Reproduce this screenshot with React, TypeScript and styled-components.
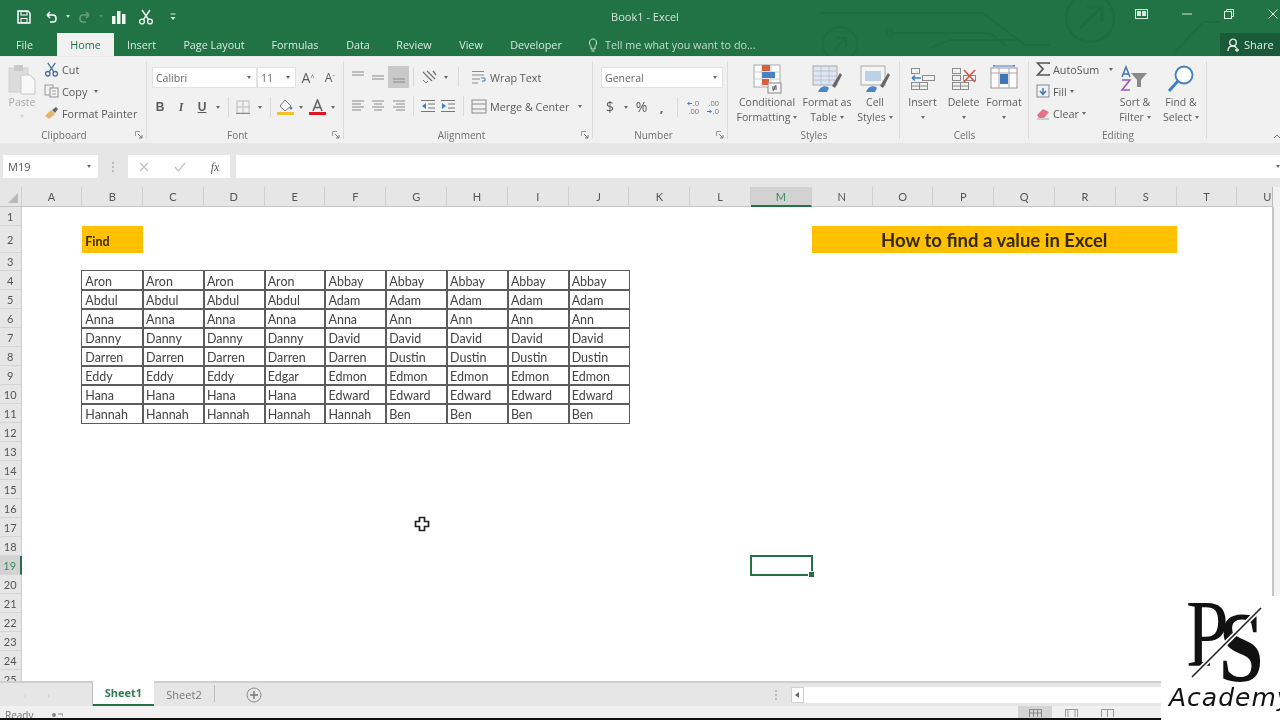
import React from "react";
import styled, { createGlobalStyle } from "styled-components";

const GREEN = "#217346";
const COL_WIDTH = 60.8;

const GlobalStyle = createGlobalStyle`
  html, body {
    margin: 0;
    padding: 0;
    background: #fff;
    overflow: hidden;
  }
  * {
    box-sizing: border-box;
  }
`;

const Window = styled.div`
  position: relative;
  width: 1280px;
  height: 720px;
  overflow: hidden;
  display: flex;
  flex-direction: column;
  background: #fff;
  font-family: "Open Sans", "Liberation Sans", sans-serif;
  font-size: 11px;
  color: #555;
  filter: blur(0.6px);
`;

/* title bar */
const TitleBar = styled.div`
  position: relative;
  z-index: 1;
  height: 33px;
  flex: none;
  background: ${GREEN};
  display: grid;
  grid-template-columns: 1fr auto 1fr;
  align-items: center;
  padding-left: 10px;
`;

const QuickAccess = styled.div`
  display: flex;
  align-items: center;
`;

const QuickSlot = styled.span<{ $w: number; $faded?: boolean }>`
  width: ${(p) => p.$w}px;
  display: flex;
  align-items: center;
  justify-content: center;
  opacity: ${(p) => (p.$faded ? 0.3 : 1)};
`;

const Title = styled.div`
  color: #d5e5db;
  font-size: 11px;
`;

const WindowButtons = styled.div`
  display: flex;
  justify-content: flex-end;
  align-items: center;
  position: relative;
  z-index: 1;
  margin-top: -5px;
`;

const WindowButton = styled.span<{ $w: number }>`
  width: ${(p) => p.$w}px;
  display: flex;
  justify-content: center;
`;

const CircuitArt = styled.svg`
  position: absolute;
  left: 800px;
  top: 0;
  pointer-events: none;
`;

/* tab strip */
const TabBar = styled.div`
  position: relative;
  height: 23px;
  flex: none;
  background: ${GREEN};
  display: flex;
  align-items: stretch;
  color: #dbe8e0;
`;

const Tab = styled.div<{ $w: number; $active?: boolean }>`
  width: ${(p) => p.$w}px;
  margin-left: ${(p) => (p.$active ? 8 : 0)}px;
  display: flex;
  align-items: center;
  justify-content: center;
  font-size: 10.8px;
  background: ${(p) => (p.$active ? "#f1f1f1" : "transparent")};
  color: ${(p) => (p.$active ? GREEN : "inherit")};
`;

const TellMe = styled.div`
  display: flex;
  align-items: center;
  gap: 7px;
  margin-left: 15px;
  font-size: 10.8px;
  color: #c4d9cc;
`;

const Share = styled.div`
  position: relative;
  z-index: 2;
  margin-left: auto;
  width: 60px;
  background: #1b5a38;
  color: #e3eee8;
  display: flex;
  align-items: center;
  gap: 4px;
  padding-left: 7px;
  font-size: 11px;
`;

/* ribbon */
const Ribbon = styled.div`
  position: relative;
  height: 87px;
  flex: none;
  display: flex;
  background: #f1f1f1;
  border-top: 1px solid #e8e8e8;
`;

const Group = styled.section<{ $w: number }>`
  position: relative;
  width: ${(p) => p.$w}px;
  flex: none;
  display: flex;
  flex-direction: column;
  &::after {
    content: "";
    position: absolute;
    right: 0;
    top: 4px;
    bottom: 4px;
    width: 1px;
    background: #dcdcdc;
  }
`;

const GroupBody = styled.div<{ $pad?: number; $col?: boolean }>`
  flex: 1;
  min-height: 0;
  display: flex;
  flex-direction: ${(p) => (p.$col ? "column" : "row")};
  padding-left: ${(p) => p.$pad ?? 0}px;
`;

const GroupLabel = styled.div<{ $shift?: number }>`
  height: 17px;
  flex: none;
  text-align: center;
  font-size: 10px;
  line-height: 18px;
  color: #6f6f6f;
  padding-right: ${(p) => p.$shift ?? 0}px;
`;

const Launcher = styled.svg`
  position: absolute;
  right: 4px;
  bottom: 4px;
`;

const PasteCol = styled.div`
  width: 44px;
  display: flex;
  flex-direction: column;
  align-items: center;
  padding-top: 7px;
  color: #a8a8a8;
  font-size: 10.5px;
  line-height: 14px;
`;

const SmallCol = styled.div<{ $w?: number }>`
  width: ${(p) => (p.$w ? `${p.$w}px` : "auto")};
  flex: none;
  display: flex;
  flex-direction: column;
  padding-top: 1px;
`;

const SmallButton = styled.div`
  height: 22px;
  display: flex;
  align-items: center;
  gap: 3px;
  font-size: 10.8px;
  color: #5a5a5a;
  white-space: nowrap;
  svg {
    flex: none;
  }
`;

const ToolRow = styled.div<{ $h: number; $top?: number }>`
  height: ${(p) => p.$h}px;
  margin-top: ${(p) => p.$top ?? 0}px;
  display: flex;
  align-items: center;
`;

const Slot = styled.span<{ $w: number; $active?: boolean }>`
  width: ${(p) => p.$w}px;
  flex: none;
  height: 100%;
  display: flex;
  align-items: center;
  justify-content: center;
  background: ${(p) => (p.$active ? "#c9c9c9" : "transparent")};
`;

const Glyph = styled.span<{ $size?: number; $weight?: number; $italic?: boolean; $underline?: boolean; $font?: string }>`
  font-size: ${(p) => p.$size ?? 12}px;
  font-weight: ${(p) => p.$weight ?? 400};
  font-style: ${(p) => (p.$italic ? "italic" : "normal")};
  text-decoration: ${(p) => (p.$underline ? "underline" : "none")};
  font-family: ${(p) => p.$font ?? "inherit"};
  color: #5c5c5c;
  line-height: 1;
`;

const Divider = styled.span<{ $l?: number; $r?: number }>`
  width: 1px;
  height: 20px;
  flex: none;
  background: #d8d8d8;
  margin-left: ${(p) => p.$l ?? 0}px;
  margin-right: ${(p) => p.$r ?? 0}px;
`;

const Caret = styled.span<{ $light?: boolean }>`
  width: 0;
  height: 0;
  flex: none;
  display: inline-block;
  border-left: 2.5px solid transparent;
  border-right: 2.5px solid transparent;
  border-top: 3px solid ${(p) => (p.$light ? "#c8d8ce" : "#6a6a6a")};
`;

const SelectBox = styled.div<{ $w: number }>`
  width: ${(p) => p.$w}px;
  height: 21px;
  flex: none;
  background: #fff;
  border: 1px solid #e2e2e2;
  display: flex;
  align-items: center;
  justify-content: space-between;
  padding: 0 5px 0 3px;
  font-size: 10.5px;
  color: #666;
`;

const DecimalStack = styled.span`
  display: flex;
  flex-direction: column;
  align-items: flex-end;
  font-size: 7.5px;
  line-height: 8px;
  color: #777;
`;

const DecimalLine = styled.span`
  display: flex;
  align-items: center;
  gap: 1px;
`;

const BigButton = styled.div<{ $w: number }>`
  width: ${(p) => p.$w}px;
  flex: none;
  display: flex;
  flex-direction: column;
  align-items: center;
  padding-top: 6px;
  font-size: 10.5px;
  line-height: 15px;
  color: #616161;
  text-align: center;
  white-space: nowrap;
`;

const BigIcon = styled.span`
  height: 32px;
  display: flex;
  align-items: center;
  justify-content: center;
`;

const CaretLine = styled.span`
  display: flex;
  align-items: center;
  justify-content: center;
  gap: 3px;
  height: 15px;
`;

const CollapseArrow = styled.svg`
  position: absolute;
  right: 0;
  bottom: 4px;
`;

/* formula bar */
const Band = styled.div<{ $h: number }>`
  height: ${(p) => p.$h}px;
  flex: none;
  background: #e6e6e6;
`;

const FormulaBar = styled.div`
  height: 23px;
  flex: none;
  background: #e6e6e6;
  display: flex;
  align-items: stretch;
  padding-left: 3px;
`;

const NameBox = styled.div`
  width: 95px;
  background: #fff;
  display: flex;
  align-items: center;
  justify-content: space-between;
  padding: 0 7px 0 5px;
  font-size: 11px;
  color: #555;
`;

const GripDots = styled.div`
  width: 30px;
  display: flex;
  flex-direction: column;
  align-items: center;
  justify-content: center;
  gap: 2px;
  span {
    width: 2px;
    height: 2px;
    background: #bbb;
  }
`;

const FxBox = styled.div`
  width: 102px;
  background: #fff;
  display: flex;
  align-items: center;
  padding-left: 9px;
  color: #bdbdbd;
`;

const FxSlot = styled.span<{ $w: number }>`
  width: ${(p) => p.$w}px;
  display: flex;
  justify-content: center;
`;

const FormulaInput = styled.div`
  flex: 1;
  margin-left: 6px;
  background: #fff;
  display: flex;
  justify-content: flex-end;
  align-items: center;
`;

/* worksheet */
const HeaderRow = styled.div`
  height: 20px;
  flex: none;
  display: flex;
  background: #e6e6e6;
`;

const Corner = styled.div`
  width: 21.5px;
  flex: none;
  display: flex;
  align-items: flex-end;
  justify-content: flex-end;
  padding: 0 3px 3px 0;
  border-right: 1px solid #cfcfcf;
  border-bottom: 1px solid #c4c4c4;
`;

const ColHeader = styled.div<{ $selected?: boolean }>`
  width: ${COL_WIDTH}px;
  flex: none;
  display: flex;
  align-items: center;
  justify-content: center;
  font-size: 11px;
  font-family: Lato, "Open Sans", sans-serif;
  color: ${(p) => (p.$selected ? "#3f8a62" : "#555")};
  background: ${(p) => (p.$selected ? "#d2d2d2" : "transparent")};
  border-right: 1px solid #cfcfcf;
  border-bottom: ${(p) => (p.$selected ? `2px solid ${GREEN}` : "1px solid #c4c4c4")};
`;

const SheetArea = styled.div`
  position: relative;
  flex: 1;
  min-height: 0;
  overflow: hidden;
`;

const Row = styled.div<{ $h: number }>`
  height: ${(p) => p.$h}px;
  display: flex;
`;

const RowHeader = styled.div<{ $selected?: boolean }>`
  width: 21.5px;
  flex: none;
  display: flex;
  align-items: center;
  justify-content: center;
  font-size: 11px;
  font-family: Lato, "Open Sans", sans-serif;
  color: ${(p) => (p.$selected ? "#3f8a62" : "#555")};
  background: ${(p) => (p.$selected ? "#d2d2d2" : "#e6e6e6")};
  border-bottom: 1px solid #d4d4d4;
  border-right: ${(p) => (p.$selected ? `2px solid ${GREEN}` : "1px solid #cfcfcf")};
`;

const Cell = styled.div<{ $span?: number }>`
  width: ${(p) => (p.$span ?? 1) * COL_WIDTH}px;
  flex: none;
`;

const NameCell = styled(Cell)`
  box-shadow: 0 0 0 1px #5c5c5c;
  display: flex;
  align-items: center;
  padding: 2px 0 0 3px;
  font-family: Lato, "Open Sans", sans-serif;
  font-size: 12.5px;
  color: #444;
`;

const FindCell = styled(Cell)`
  background: #ffc000;
  display: flex;
  align-items: center;
  padding: 3px 0 0 3px;
  font-family: Lato, "Open Sans", sans-serif;
  font-size: 12.5px;
  font-weight: 700;
  color: #3a2c00;
`;

const HeadingCell = styled(Cell)`
  background: #ffc000;
  display: flex;
  align-items: center;
  justify-content: center;
  font-family: Lato, "Open Sans", sans-serif;
  font-size: 18.5px;
  font-weight: 700;
  color: #33290a;
`;

const ActiveCell = styled(Cell)`
  position: relative;
  box-shadow: 0 0 0 1px ${GREEN}, inset 0 0 0 1px ${GREEN};
  &::after {
    content: "";
    position: absolute;
    right: -3px;
    bottom: -3px;
    width: 5px;
    height: 5px;
    background: ${GREEN};
    border: 1px solid #fff;
  }
`;

const ScrollTrack = styled.div`
  position: absolute;
  right: 0;
  top: 0;
  bottom: 84px;
  width: 8px;
  background: #f4f4f4;
  border-left: 2px solid #c6c6c6;
`;

const ColumnEdge = styled.div`
  position: absolute;
  right: 0;
  top: 187px;
  width: 8px;
  height: 20px;
  background: #f1f1f1;
  border-left: 1px solid #bbb;
`;

const PointerIcon = styled.svg`
  position: absolute;
  left: 414px;
  top: 516px;
`;

/* bottom bars */
const SheetTabs = styled.div`
  height: 25px;
  flex: none;
  background: #e6e6e6;
  border-top: 2px solid #cfcfcf;
  display: flex;
  align-items: stretch;
`;

const NavArrows = styled.div`
  width: 93px;
  flex: none;
  display: flex;
  align-items: center;
  padding-left: 24px;
  gap: 20px;
  color: #cfcfcf;
  font-size: 10px;
  border-right: 1px solid #bcbcbc;
`;

const SheetTab = styled.div<{ $active?: boolean }>`
  width: ${(p) => (p.$active ? 61 : 60)}px;
  flex: none;
  display: flex;
  align-items: center;
  justify-content: center;
  font-size: 11px;
  font-weight: ${(p) => (p.$active ? 700 : 400)};
  color: ${(p) => (p.$active ? "#2f7d52" : "#777")};
  background: ${(p) => (p.$active ? "#fff" : "transparent")};
  border-bottom: ${(p) => (p.$active ? `2px solid ${GREEN}` : "none")};
  margin-top: ${(p) => (p.$active ? -2 : 0)}px;
`;

const TabSeparator = styled.span`
  width: 1px;
  background: #bcbcbc;
  margin: 2px 0 4px;
`;

const AddSheet = styled.span`
  margin-left: 31px;
  display: flex;
  align-items: center;
`;

const SheetGrip = styled(GripDots)`
  margin-left: auto;
  width: 14px;
`;

const HScroll = styled.div`
  width: 489px;
  margin: 4px 0 3px 8px;
  flex: none;
  display: flex;
  background: #fff;
`;

const HScrollButton = styled.span`
  width: 13px;
  display: flex;
  align-items: center;
  justify-content: center;
  border: 1px solid #d0d0d0;
`;

const StatusBar = styled.div`
  height: 14px;
  flex: none;
  background: #f1f1f1;
  border-bottom: 2px solid #111;
  display: flex;
  align-items: center;
  padding-left: 5px;
  font-size: 10px;
  color: #777;
  overflow: hidden;
`;

const ReadyText = styled.span`
  margin-top: 5px;
  width: 46px;
`;

const ViewButton = styled.span<{ $w: number; $active?: boolean }>`
  width: ${(p) => p.$w}px;
  height: 100%;
  display: flex;
  align-items: center;
  justify-content: center;
  background: ${(p) => (p.$active ? "#d4d4d4" : "transparent")};
`;

const ViewGroup = styled.div`
  margin-left: 955px;
  height: 100%;
  display: flex;
  flex: none;
`;

/* logo watermark */
const Logo = styled.div`
  position: absolute;
  left: 1161px;
  top: 596px;
  width: 119px;
  height: 124px;
  background: #fff;
  overflow: hidden;
`;

const LogoLetter = styled.span<{ $x: number; $y: number; $size: number; $bold?: boolean }>`
  position: absolute;
  left: ${(p) => p.$x}px;
  top: ${(p) => p.$y}px;
  font-family: "Liberation Serif", serif;
  font-size: ${(p) => p.$size}px;
  font-weight: ${(p) => (p.$bold ? 700 : 400)};
  line-height: 1;
  color: #111;
  transform: scaleX(0.8);
  transform-origin: left top;
`;

const LogoSlash = styled.svg`
  position: absolute;
  left: 0;
  top: 0;
`;

const LogoWord = styled.span`
  position: absolute;
  left: 8px;
  top: 87px;
  font-family: "DejaVu Sans", sans-serif;
  font-style: italic;
  font-size: 25px;
  letter-spacing: 1px;
  color: #111;
  white-space: nowrap;
`;

/* drawings */
const Svg = ({ w, h, children }: { w: number; h: number; children: React.ReactNode }) => (
    <svg width={w} height={h} viewBox={`0 0 ${w} ${h}`} fill="none">{children}</svg>
);

const lines = (rows: number[], x1: number, x2: number, color = "#777") => rows.map((y) =>
    <line key={y} x1={x1} y1={y} x2={x2} y2={y} stroke={color} strokeWidth="1" />
);

const ScissorsIcon = ({ color, size = 16 }: { color: string; size?: number }) => (
    <svg width={size} height={size} viewBox="0 0 16 16" fill="none" stroke={color} strokeWidth="1.4">
        <path d="M4 1 L10.5 10.5 M12 1 L5.5 10.5" />
        <circle cx="4" cy="12.5" r="2.4" />
        <circle cx="12" cy="12.5" r="2.4" />
    </svg>
);

const AlignIcon = ({ rows, widths }: { rows: number[]; widths: [number, number][] }) => (
    <Svg w={16} h={16}>
        {rows.map((y, i) => <line key={y} x1={widths[i][0]} x2={widths[i][1]} y1={y} y2={y} stroke="#8a8a8a" />)}
    </Svg>
);

const IndentIcon = ({ flip }: { flip?: boolean }) => (
    <Svg w={16} h={14}>
        {lines([1.5, 12.5], 1, 15)}
        {lines([5, 9], 8, 15)}
        <path d={flip ? "M2 4 L6 7 L2 10 Z" : "M6 4 L2 7 L6 10 Z"} fill="#3f7fc4" />
    </Svg>
);

const SheetGridIcon = ({ accent }: { accent?: string }) => (
    <Svg w={26} h={24}>
        <rect x="1.5" y="1.5" width="8" height="5" stroke="#8b8b8b" />
        <rect x="1.5" y="15.5" width="16" height="7" stroke="#8b8b8b" />
        <line x1="9.5" y1="15.5" x2="9.5" y2="22.5" stroke="#8b8b8b" />
        <line x1="1.5" y1="19" x2="17.5" y2="19" stroke="#8b8b8b" />
        <rect x="12.5" y="8.5" width="12" height="5" stroke="#8b8b8b" />
        {accent === "blue" && <path d="M2 11 L11 11 M2 11 L5 8.5 M2 11 L5 13.5" stroke="#3f7fc4" strokeWidth="1.5" />}
        {accent === "red" && <path d="M13 3 L24 15 M24 3 L13 15" stroke="#d9503f" strokeWidth="1.6" />}
        {accent === "red" && <rect x="1.5" y="8.5" width="8" height="5" stroke="#8b8b8b" />}
    </Svg>
);

const SmallArrow = ({ flip }: { flip?: boolean }) => (
    <Svg w={5} h={5}>
        <path d={flip ? "M0 2.5 H4 M2.5 1 L4.5 2.5 L2.5 4" : "M5 2.5 H1 M2.5 1 L0.5 2.5 L2.5 4"} stroke="#3f7fc4" />
    </Svg>
);

const Launch = () => (
    <Launcher width="8" height="8" viewBox="0 0 8 8" fill="none">
        <path d="M0.5 5 V0.5 H5" stroke="#999" />
        <path d="M3 3 L7 7 M7 4 V7 H4" stroke="#777" />
    </Launcher>
);

const names: string[][] = [
    ["Aron", "Aron", "Aron", "Aron", "Abbay", "Abbay", "Abbay", "Abbay", "Abbay"],
    ["Abdul", "Abdul", "Abdul", "Abdul", "Adam", "Adam", "Adam", "Adam", "Adam"],
    ["Anna", "Anna", "Anna", "Anna", "Anna", "Ann", "Ann", "Ann", "Ann"],
    ["Danny", "Danny", "Danny", "Danny", "David", "David", "David", "David", "David"],
    ["Darren", "Darren", "Darren", "Darren", "Darren", "Dustin", "Dustin", "Dustin", "Dustin"],
    ["Eddy", "Eddy", "Eddy", "Edgar", "Edmon", "Edmon", "Edmon", "Edmon", "Edmon"],
    ["Hana", "Hana", "Hana", "Hana", "Edward", "Edward", "Edward", "Edward", "Edward"],
    ["Hannah", "Hannah", "Hannah", "Hannah", "Hannah", "Ben", "Ben", "Ben", "Ben"],
];

const columns = "ABCDEFGHIJKLMNOPQRSTU".split("");

const rowHeight = (row: number) => {
    if (row === 2) return 27;
    if (row === 3) return 18;
    return 19;
};

const rowContent = (row: number) => {
    if (row === 2) {
        return (
            <>
                <Cell />
                <FindCell>Find</FindCell>
                <Cell $span={11} />
                <HeadingCell $span={6}>How to find a value in Excel</HeadingCell>
            </>
        );
    }
    if (row >= 4 && row <= 11) {
        return (
            <>
                <Cell />
                {names[row - 4].map((name, i) => <NameCell key={i}>{name}</NameCell>)}
            </>
        );
    }
    if (row === 19) {
        return (
            <>
                <Cell $span={12} />
                <ActiveCell />
            </>
        );
    }
    return null;
};

const Sheet = () => (
    <SheetArea>
        {Array.from({ length: 25 }, (_, i) => i + 1).map((row) => (
            <Row key={row} $h={rowHeight(row)}>
                <RowHeader $selected={row === 19}>{row}</RowHeader>
                {rowContent(row)}
            </Row>
        ))}
        <ScrollTrack />
    </SheetArea>
);

const TopBar = () => (
    <TitleBar>
        <QuickAccess>
            <QuickSlot $w={28}>
                <Svg w={16} h={16}>
                    <path d="M2 2 H12 L14 4 V14 H2 Z" stroke="#fff" strokeWidth="1.5" />
                    <rect x="5" y="2.5" width="6" height="3.5" stroke="#fff" />
                    <rect x="5" y="9.5" width="6" height="4" stroke="#fff" />
                </Svg>
            </QuickSlot>
            <QuickSlot $w={26}>
                <Svg w={16} h={14}>
                    <path d="M4 5 H10 C14 5 14 12 10 12 H7 M4 5 L7 2 M4 5 L7 8" stroke="#fff" strokeWidth="1.6" />
                </Svg>
            </QuickSlot>
            <QuickSlot $w={8}><Caret $light /></QuickSlot>
            <QuickSlot $w={26} $faded>
                <Svg w={16} h={14}>
                    <path d="M12 5 H6 C2 5 2 12 6 12 H9 M12 5 L9 2 M12 5 L9 8" stroke="#fff" strokeWidth="1.6" />
                </Svg>
            </QuickSlot>
            <QuickSlot $w={6} $faded><Caret $light /></QuickSlot>
            <QuickSlot $w={30}>
                <Svg w={16} h={14}>
                    <rect x="1" y="6" width="3.5" height="8" fill="#f1f5f2" />
                    <rect x="6" y="1" width="3.5" height="13" fill="#f1f5f2" />
                    <rect x="11" y="4" width="3.5" height="10" fill="#f1f5f2" />
                </Svg>
            </QuickSlot>
            <QuickSlot $w={24}><ScissorsIcon color="#eef3f0" /></QuickSlot>
            <QuickSlot $w={30}>
                <Svg w={6} h={8}>
                    <line x1="0.5" y1="1" x2="5.5" y2="1" stroke="#dce8e0" />
                    <path d="M0.5 4 H5.5 L3 7 Z" fill="#dce8e0" />
                </Svg>
            </QuickSlot>
        </QuickAccess>
        <Title>Book1 - Excel</Title>
        <WindowButtons>
            <WindowButton $w={82}>
                <Svg w={13} h={10}>
                    <rect x="0.5" y="0.5" width="12" height="9" stroke="#d7e5dc" />
                    <rect x="2" y="2" width="4" height="5" fill="#d7e5dc" />
                    <rect x="7" y="2" width="4" height="5" fill="#d7e5dc" />
                </Svg>
            </WindowButton>
            <WindowButton $w={10}>
                <Svg w={10} h={2}><line x1="0" y1="1" x2="10" y2="1" stroke="#d7e5dc" /></Svg>
            </WindowButton>
            <WindowButton $w={74}>
                <Svg w={10} h={10}>
                    <rect x="0.5" y="2.5" width="7" height="7" stroke="#e5eee9" />
                    <path d="M2.5 2.5 V0.5 H9.5 V7.5 H7.5" stroke="#e5eee9" />
                </Svg>
            </WindowButton>
            <WindowButton $w={14}>
                <Svg w={10} h={10}><path d="M0.5 0.5 L9.5 9.5 M9.5 0.5 L0.5 9.5" stroke="#e5eee9" /></Svg>
            </WindowButton>
        </WindowButtons>
        <CircuitArt width="420" height="56" viewBox="0 0 420 56" fill="none" stroke="#1e6c41" strokeWidth="1.6">
            <path d="M20 13 H183 L225 45 H250" />
            <path d="M93 33 H190 L206 46" />
            <path d="M130 48 L150 40 H218" />
            <circle cx="90" cy="33" r="3" />
            <circle cx="40" cy="44" r="17" />
            <path d="M34 50 L46 38 M37 38 H46 V47" />
            <circle cx="290" cy="18" r="24" strokeWidth="2.5" />
            <path d="M280 28 L302 7 M287 7 H302 V22" strokeWidth="3" />
            <path d="M375 52 L403 22 H420" />
        </CircuitArt>
    </TitleBar>
);

const Tabs = () => (
    <TabBar>
        <Tab $w={49}>File</Tab>
        <Tab $w={57} $active>Home</Tab>
        <Tab $w={55}>Insert</Tab>
        <Tab $w={90}>Page Layout</Tab>
        <Tab $w={72}>Formulas</Tab>
        <Tab $w={54}>Data</Tab>
        <Tab $w={58}>Review</Tab>
        <Tab $w={56}>View</Tab>
        <Tab $w={74}>Developer</Tab>
        <TellMe>
            <Svg w={10} h={14}>
                <path d="M5 1 C1 1 0.5 6 3 8.5 V11 H7 V8.5 C9.5 6 9 1 5 1 Z M3.5 13 H6.5" stroke="#d8e6dd" />
            </Svg>
            Tell me what you want to do...
        </TellMe>
        <Share>
            <Svg w={13} h={14}>
                <circle cx="6" cy="4.5" r="3.3" stroke="#e6efe9" strokeWidth="1.3" />
                <path d="M1 13 C1 9 4 8 6 8 C8 8 9 9 9.5 10 M10 10 V14 M8 12 H12" stroke="#e6efe9" strokeWidth="1.3" />
            </Svg>
            Share
        </Share>
    </TabBar>
);

const ClipboardGroup = () => (
    <Group $w={147}>
        <GroupBody>
            <PasteCol>
                <Svg w={28} h={31}>
                    <rect x="1" y="4" width="19" height="24" fill="#dcdcdc" stroke="#d0d0d0" />
                    <rect x="6" y="1" width="9" height="6" fill="#c9c9c9" />
                    <path d="M13 11 H22 L27 16 V30 H13 Z" fill="#f8f8f8" stroke="#c8c8c8" />
                </Svg>
                <span>Paste</span>
                <CaretLine><Caret $light /></CaretLine>
            </PasteCol>
            <SmallCol>
                <SmallButton><ScissorsIcon color="#4c6f97" size={15} />Cut</SmallButton>
                <SmallButton>
                    <Svg w={15} h={14}>
                        <rect x="1" y="1" width="8" height="10" stroke="#9a9a9a" />
                        <rect x="6" y="4" width="8" height="9" fill="#f5f5f5" stroke="#8f8f8f" />
                        <path d="M8 7 H12 M8 10 H12" stroke="#9a9a9a" />
                    </Svg>
                    Copy
                    <Slot $w={12}><Caret /></Slot>
                </SmallButton>
                <SmallButton>
                    <Svg w={15} h={14}>
                        <path d="M1 10 L7 4 L11 8 L5 13 Z" fill="#e6b565" />
                        <path d="M8 4 L12 1 L14 3 L11 7 Z" fill="#666" />
                    </Svg>
                    Format Painter
                </SmallButton>
            </SmallCol>
        </GroupBody>
        <GroupLabel $shift={19}>Clipboard</GroupLabel>
        <Launch />
    </Group>
);

const FontGroup = () => (
    <Group $w={197}>
        <GroupBody $pad={5} $col>
            <ToolRow $h={21} $top={10}>
                <SelectBox $w={105}>Calibri<Caret /></SelectBox>
                <SelectBox $w={39}>11<Caret /></SelectBox>
                <Slot $w={24}><Glyph $size={14}>A</Glyph><Glyph $size={7}>^</Glyph></Slot>
                <Slot $w={20}><Glyph $size={12}>A</Glyph><Glyph $size={7}>ˇ</Glyph></Slot>
            </ToolRow>
            <ToolRow $h={22} $top={8}>
                <Slot $w={2} />
                <Slot $w={12}><Glyph $weight={700} $font="Liberation Sans">B</Glyph></Slot>
                <Slot $w={9} />
                <Slot $w={12}><Glyph $italic $weight={700} $font="Liberation Serif">I</Glyph></Slot>
                <Slot $w={9} />
                <Slot $w={12}><Glyph $underline $weight={700} $font="Liberation Sans">U</Glyph></Slot>
                <Slot $w={20}><Caret /></Slot>
                <Divider $r={5} />
                <Slot $w={18}>
                    <Svg w={14} h={14}>
                        <rect x="1" y="1" width="12" height="12" stroke="#bcbcbc" />
                        <path d="M7 1 V13 M1 7 H13" stroke="#bcbcbc" />
                        <line x1="0" y1="13.5" x2="14" y2="13.5" stroke="#8a8a8a" />
                    </Svg>
                </Slot>
                <Slot $w={16}><Caret /></Slot>
                <Divider $l={2} $r={5} />
                <Slot $w={18}>
                    <Svg w={17} h={16}>
                        <path d="M8 1 L14 7 L8 12 L3 7 Z" fill="#fff" stroke="#777" />
                        <circle cx="14" cy="9" r="1.5" fill="#4a8bd0" />
                        <rect x="0" y="13" width="17" height="3" fill="#f3c22b" />
                    </Svg>
                </Slot>
                <Slot $w={14}><Caret /></Slot>
                <Slot $w={18}>
                    <Svg w={17} h={16}>
                        <path d="M4 12 L8.5 1 L13 12 M6 8.5 H11" stroke="#666" strokeWidth="1.6" />
                        <rect x="0" y="13" width="17" height="3" fill="#e0141e" />
                    </Svg>
                </Slot>
                <Slot $w={14}><Caret /></Slot>
            </ToolRow>
        </GroupBody>
        <GroupLabel $shift={16}>Font</GroupLabel>
        <Launch />
    </Group>
);

const AlignmentGroup = () => (
    <Group $w={249}>
        <GroupBody $pad={4} $col>
            <ToolRow $h={22} $top={9}>
                <Slot $w={20}><AlignIcon rows={[3, 6]} widths={[[2, 14], [2, 14]]} /></Slot>
                <Slot $w={20}><AlignIcon rows={[7, 10]} widths={[[2, 14], [2, 14]]} /></Slot>
                <Slot $w={21} $active><AlignIcon rows={[10, 13]} widths={[[2, 14], [2, 14]]} /></Slot>
                <Divider $l={4} $r={4} />
                <Slot $w={24}>
                    <Svg w={18} h={14}>
                        <path d="M2 2 L11 11 M6 1 L14 9 M12 1 L15 5" stroke="#777" strokeWidth="1.3" />
                        <path d="M2 10 L5 13 L7 11" stroke="#777" />
                    </Svg>
                </Slot>
                <Slot $w={7}><Caret /></Slot>
                <Divider $l={9} $r={9} />
                <Slot $w={22}>
                    <Svg w={16} h={15}>
                        {lines([1.5, 5], 1, 13, "#8b8b8b")}
                        {lines([9], 1, 9, "#8b8b8b")}
                        {lines([13], 1, 7, "#8b8b8b")}
                        <path d="M10 8 H14 V11 H11" stroke="#3f7fc4" />
                    </Svg>
                </Slot>
                <SmallButton>Wrap Text</SmallButton>
            </ToolRow>
            <ToolRow $h={22} $top={7}>
                <Slot $w={20}><AlignIcon rows={[3, 6, 9, 12]} widths={[[2, 14], [2, 11], [2, 14], [2, 11]]} /></Slot>
                <Slot $w={20}><AlignIcon rows={[3, 6, 9, 12]} widths={[[2, 14], [4, 12], [2, 14], [4, 12]]} /></Slot>
                <Slot $w={21}><AlignIcon rows={[3, 6, 9, 12]} widths={[[2, 14], [5, 14], [2, 14], [5, 14]]} /></Slot>
                <Divider $l={4} $r={4} />
                <Slot $w={19}><IndentIcon /></Slot>
                <Slot $w={22}><IndentIcon flip /></Slot>
                <Divider $l={4} $r={4} />
                <Slot $w={22}>
                    <Svg w={16} h={15}>
                        <rect x="1" y="1" width="14" height="13" stroke="#8b8b8b" />
                        <path d="M1 5 H15 M1 10 H15" stroke="#8b8b8b" />
                    </Svg>
                </Slot>
                <SmallButton>Merge &amp; Center</SmallButton>
                <Slot $w={22}><Caret /></Slot>
            </ToolRow>
        </GroupBody>
        <GroupLabel $shift={14}>Alignment</GroupLabel>
        <Launch />
    </Group>
);

const NumberGroup = () => (
    <Group $w={135}>
        <GroupBody $pad={8} $col>
            <ToolRow $h={21} $top={10}>
                <SelectBox $w={122}>General<Caret /></SelectBox>
            </ToolRow>
            <ToolRow $h={22} $top={8}>
                <Slot $w={18}><Glyph $size={14}>$</Glyph></Slot>
                <Slot $w={14}><Caret /></Slot>
                <Slot $w={17}><Glyph $size={14}>%</Glyph></Slot>
                <Slot $w={23}><Glyph $size={13} $weight={700}>,</Glyph></Slot>
                <Divider $l={4} $r={4} />
                <Slot $w={22}>
                    <DecimalStack>
                        <DecimalLine><SmallArrow />.0</DecimalLine>
                        <span>.00</span>
                    </DecimalStack>
                </Slot>
                <Slot $w={18}>
                    <DecimalStack>
                        <span>.00</span>
                        <DecimalLine><SmallArrow flip />.0</DecimalLine>
                    </DecimalStack>
                </Slot>
            </ToolRow>
        </GroupBody>
        <GroupLabel $shift={14}>Number</GroupLabel>
        <Launch />
    </Group>
);

const StylesGroup = () => (
    <Group $w={172}>
        <GroupBody $pad={9}>
            <BigButton $w={60}>
                <BigIcon>
                    <Svg w={30} h={30}>
                        <rect x="2" y="1" width="26" height="22" fill="#fff" stroke="#aaa" />
                        <path d="M2 8 H28 M2 15 H28 M10 1 V23 M19 1 V23" stroke="#ccc" />
                        <rect x="10" y="1" width="8" height="6" fill="#d9603f" />
                        <rect x="10" y="8" width="13" height="6" fill="#4a80c4" />
                        <rect x="10" y="15" width="7" height="6" fill="#d9603f" />
                        <rect x="16" y="19" width="13" height="10" fill="#f4f4f4" stroke="#888" />
                        <path d="M20 23 H25 M20 25 H25 M24 21 L21 27" stroke="#555" />
                    </Svg>
                </BigIcon>
                Conditional
                <CaretLine>Formatting<Caret /></CaretLine>
            </BigButton>
            <BigButton $w={60}>
                <BigIcon>
                    <Svg w={30} h={30}>
                        <rect x="1" y="2" width="24" height="19" fill="#dfe6ef" stroke="#aaa" />
                        <path d="M1 7 H25 M1 12 H25 M1 16 H25 M9 2 V21 M17 2 V21" stroke="#b8c4d4" />
                        <path d="M20 22 L28 9 L30 11 L23 24 Z" fill="#666" />
                        <path d="M6 28 C9 20 16 22 17 24 L15 28 Z" fill="#4a86c8" />
                    </Svg>
                </BigIcon>
                Format as
                <CaretLine>Table<Caret /></CaretLine>
            </BigButton>
            <BigButton $w={36}>
                <BigIcon>
                    <Svg w={30} h={30}>
                        <rect x="1" y="2" width="24" height="19" fill="#f5f5f5" stroke="#aaa" />
                        <rect x="5" y="7" width="16" height="10" fill="#bcd0e6" />
                        <path d="M20 22 L28 9 L30 11 L23 24 Z" fill="#666" />
                        <path d="M6 28 C9 20 16 22 17 24 L15 28 Z" fill="#4a86c8" />
                    </Svg>
                </BigIcon>
                Cell
                <CaretLine>Styles<Caret /></CaretLine>
            </BigButton>
        </GroupBody>
        <GroupLabel>Styles</GroupLabel>
    </Group>
);

const CellsGroup = () => (
    <Group $w={129}>
        <GroupBody $pad={2}>
            <BigButton $w={41}>
                <BigIcon><SheetGridIcon accent="blue" /></BigIcon>
                Insert
                <CaretLine><Caret /></CaretLine>
            </BigButton>
            <BigButton $w={41}>
                <BigIcon><SheetGridIcon accent="red" /></BigIcon>
                Delete
                <CaretLine><Caret /></CaretLine>
            </BigButton>
            <BigButton $w={40}>
                <BigIcon>
                    <Svg w={28} h={28}>
                        <rect x="1" y="3" width="26" height="20" fill="#fbfbfb" stroke="#999" />
                        <path d="M1 8 H27 M9 3 V23 M19 3 V23" stroke="#aaa" />
                        <rect x="10" y="9" width="8" height="10" fill="#3f74b5" />
                        <path d="M3 1 H25 M3 1 L5 0 M25 1 L23 0" stroke="#3f7fc4" />
                    </Svg>
                </BigIcon>
                Format
                <CaretLine><Caret /></CaretLine>
            </BigButton>
        </GroupBody>
        <GroupLabel>Cells</GroupLabel>
    </Group>
);

const EditingGroup = () => (
    <Group $w={178}>
        <GroupBody $pad={7}>
            <SmallCol $w={76}>
                <SmallButton>
                    <Svg w={14} h={14}><path d="M13 2 V1 H1.5 L7 7 L1.5 13 H13 V12" stroke="#555" strokeWidth="1.7" /></Svg>
                    AutoSum
                    <Slot $w={18}><Caret /></Slot>
                </SmallButton>
                <SmallButton>
                    <Svg w={14} h={14}>
                        <rect x="1" y="1" width="12" height="12" fill="#eef2f7" stroke="#888" />
                        <path d="M7 4 V10 M4 7 L7 10.5 L10 7" stroke="#3f74b5" strokeWidth="1.4" />
                    </Svg>
                    Fill<Caret />
                </SmallButton>
                <SmallButton>
                    <Svg w={14} h={14}>
                        <path d="M1 9 L7 3 L13 6 L8 12 H3 Z" fill="#e6728a" />
                        <line x1="1" y1="13" x2="13" y2="13" stroke="#aaa" />
                    </Svg>
                    Clear<Caret />
                </SmallButton>
            </SmallCol>
            <BigButton $w={46}>
                <BigIcon>
                    <Svg w={32} h={28}>
                        <path d="M3 12 L7 2 L11 12 M4.5 9 H9.5" stroke="#3f74b5" strokeWidth="1.5" />
                        <path d="M3 15 H11 L3 25 H11" stroke="#9c5bb5" strokeWidth="1.6" />
                        <path d="M12 8 H28 L22 15 V22 H18 V15 Z" fill="#8a8a8a" />
                    </Svg>
                </BigIcon>
                Sort &amp;
                <CaretLine>Filter<Caret /></CaretLine>
            </BigButton>
            <BigButton $w={46}>
                <BigIcon>
                    <Svg w={30} h={30}>
                        <circle cx="18" cy="11" r="8.5" fill="#fff" stroke="#3f7fc4" strokeWidth="1.8" />
                        <path d="M12 17 L3 27" stroke="#3f7fc4" strokeWidth="3" />
                    </Svg>
                </BigIcon>
                Find &amp;
                <CaretLine>Select<Caret /></CaretLine>
            </BigButton>
        </GroupBody>
        <GroupLabel>Editing</GroupLabel>
    </Group>
);

const FormulaRow = () => (
    <FormulaBar>
        <NameBox>M19<Caret /></NameBox>
        <GripDots><span /><span /><span /></GripDots>
        <FxBox>
            <FxSlot $w={14}>
                <Svg w={10} h={10}><path d="M1 1 L9 9 M9 1 L1 9" stroke="#c2c2c2" strokeWidth="1.2" /></Svg>
            </FxSlot>
            <FxSlot $w={58}>
                <Svg w={12} h={10}><path d="M1 5 L4.5 9 L11 1" stroke="#c2c2c2" strokeWidth="1.2" /></Svg>
            </FxSlot>
            <FxSlot $w={12}><Glyph $italic $size={12} $font="Liberation Serif">fx</Glyph></FxSlot>
        </FxBox>
        <FormulaInput><Caret /></FormulaInput>
    </FormulaBar>
);

const BottomBars = () => (
    <>
        <SheetTabs>
            <NavArrows><span>‹</span><span>›</span></NavArrows>
            <SheetTab $active>Sheet1</SheetTab>
            <SheetTab>Sheet2</SheetTab>
            <TabSeparator />
            <AddSheet>
                <Svg w={16} h={16}>
                    <circle cx="8" cy="8" r="7" stroke="#8c8c8c" />
                    <path d="M8 4 V12 M4 8 H12" stroke="#777" strokeWidth="1.4" />
                </Svg>
            </AddSheet>
            <SheetGrip><span /><span /><span /></SheetGrip>
            <HScroll>
                <HScrollButton><Svg w={5} h={6}><path d="M4 0 L0 3 L4 6 Z" fill="#666" /></Svg></HScrollButton>
            </HScroll>
        </SheetTabs>
        <StatusBar>
            <ReadyText>Ready</ReadyText>
            <Svg w={12} h={10}>
                <circle cx="3" cy="8" r="2" fill="#888" />
                <path d="M7 7 H12 V10" stroke="#888" />
            </Svg>
            <ViewGroup>
                <ViewButton $w={34} $active>
                    <Svg w={13} h={10}><rect x="0.5" y="2.5" width="12" height="8" stroke="#888" /><path d="M4.5 2 V10 M8.5 2 V10 M0 6 H13" stroke="#888" /></Svg>
                </ViewButton>
                <ViewButton $w={38}>
                    <Svg w={13} h={10}><rect x="0.5" y="2.5" width="12" height="8" stroke="#999" /><path d="M3 2 V10 M10 2 V10" stroke="#999" /></Svg>
                </ViewButton>
                <ViewButton $w={34}>
                    <Svg w={13} h={10}><rect x="0.5" y="2.5" width="12" height="8" stroke="#999" /><path d="M6.5 2 V10" stroke="#999" /></Svg>
                </ViewButton>
            </ViewGroup>
        </StatusBar>
    </>
);

const App = () => (
    <>
        <GlobalStyle />
        <Window>
            <TopBar />
            <Tabs />
            <Ribbon>
                <ClipboardGroup />
                <FontGroup />
                <AlignmentGroup />
                <NumberGroup />
                <StylesGroup />
                <CellsGroup />
                <EditingGroup />
                <CollapseArrow width="6" height="5" viewBox="0 0 6 5" fill="none">
                    <path d="M0 4 L3 1 L6 4" stroke="#777" />
                </CollapseArrow>
            </Ribbon>
            <Band $h={12} />
            <FormulaRow />
            <Band $h={9} />
            <HeaderRow>
                <Corner>
                    <Svg w={10} h={10}><path d="M10 0 V10 H0 Z" fill="#b9b9b9" /></Svg>
                </Corner>
                {columns.map((c) => <ColHeader key={c} $selected={c === "M"}>{c}</ColHeader>)}
            </HeaderRow>
            <Sheet />
            <BottomBars />
            <ColumnEdge />
            <PointerIcon width="16" height="16" viewBox="0 0 16 16" fill="#fff" stroke="#222" strokeWidth="1.7">
                <path d="M5.5 1.5 H10.5 V5.5 H14.5 V10.5 H10.5 V14.5 H5.5 V10.5 H1.5 V5.5 H5.5 Z" />
            </PointerIcon>
            <Logo>
                <LogoLetter $x={25} $y={-10} $size={96}>P</LogoLetter>
                <LogoLetter $x={58} $y={1} $size={100} $bold>S</LogoLetter>
                <LogoSlash width="119" height="90" viewBox="0 0 119 90" fill="none">
                    <path d="M100 12 L31 81" stroke="#fff" strokeWidth="5" />
                    <path d="M100 12 L31 81" stroke="#222" strokeWidth="1.6" />
                </LogoSlash>
                <LogoWord>Academy</LogoWord>
            </Logo>
        </Window>
    </>
);

export default App;
